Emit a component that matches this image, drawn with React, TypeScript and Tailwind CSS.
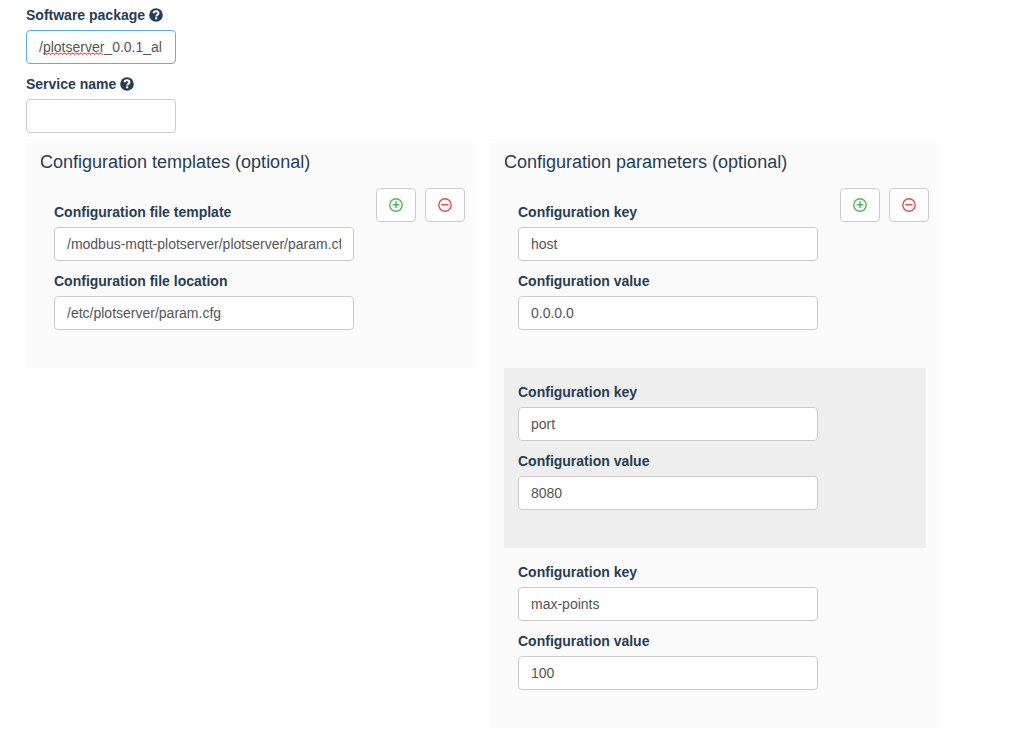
import { useId, useState } from "react";
import type { ReactNode } from "react";
import clsx from "clsx";

type FieldProps = {
  label: string;
  value: string;
  help?: boolean;
  active?: boolean;
  children?: ReactNode;
};

function HelpIcon() {
  return (
    <svg aria-hidden="true" viewBox="0 0 14 14" className="size-3.5">
      <circle cx="7" cy="7" r="6.8" fill="currentColor" />
      <path
        d="M4.6 5.3C4.6 3.9 5.6 3.2 7 3.2C8.5 3.2 9.5 4 9.5 5.2C9.5 6.7 7.2 6.8 7.2 8.6"
        fill="none"
        stroke="white"
        strokeWidth="1.9"
      />
      <rect x="6.1" y="9.3" width="2.1" height="2" fill="white" />
    </svg>
  );
}

function Field({ label, value, help, active, children }: FieldProps) {
  const id = useId();
  const [text, setText] = useState(value);
  return (
    <div>
      <label htmlFor={id} className="mb-[5px] flex items-center gap-1 font-bold">
        {label}
        {help && <HelpIcon />}
      </label>
      <div className="relative">
        <input
          id={id}
          type="text"
          value={text}
          onChange={(e) => setText(e.target.value)}
          className={clsx(
            "block h-[34px] w-full rounded-sm border bg-white px-3 text-[#555555] outline-none focus:border-[#5dade2]",
            active ? "border-[#5dade2]" : "border-[#cccccc]",
          )}
        />
        {children}
      </div>
    </div>
  );
}

function SpellingMark() {
  return (
    <svg
      aria-hidden="true"
      className="pointer-events-none absolute top-[22px] left-[17px] h-[3px] w-[62px]"
      viewBox="0 0 62 3"
    >
      <path
        d={"M0 2.2" + " l1 -1 l1 0 l1 1 l1 0".repeat(15)}
        fill="none"
        stroke="#ee1c1c"
        strokeWidth="1"
      />
    </svg>
  );
}

function RoundButton({ kind }: { kind: "add" | "remove" }) {
  const add = kind === "add";
  return (
    <button
      type="button"
      aria-label={add ? "Add" : "Remove"}
      className={clsx(
        "flex h-[34px] w-10 items-center justify-center rounded-sm border border-[#cccccc] bg-white",
        add ? "text-[#4cb85c]" : "text-[#e0504c]",
      )}
    >
      <svg viewBox="0 0 14 14" className="size-3.5" fill="none" stroke="currentColor">
        <circle cx="7" cy="7" r="6.2" strokeWidth="1.4" />
        <path d={add ? "M3.6 6.7h6.8M7 3.3v6.8" : "M3.4 6.7h7.2"} strokeWidth="1.5" />
      </svg>
    </button>
  );
}

type Entry = { label: string; value: string }[];

function Panel({ title, entries }: { title: string; entries: Entry[] }) {
  return (
    <section className="w-[450px] bg-[#fbfbfb] px-3.5">
      <h2 className="h-[45px] pt-2 text-lg leading-[22px]">{title}</h2>
      {entries.map((entry, i) => (
        <div
          key={i}
          className={clsx("flex items-start gap-[22px] pl-3.5", i % 2 === 1 && "bg-[#eeeeee]")}
        >
          <div className="flex w-[300px] shrink-0 flex-col gap-2.5 pt-3.5 pb-[38px]">
            {entry.map((f) => (
              <Field key={f.label} label={f.label} value={f.value} />
            ))}
          </div>
          {i === 0 && (
            <div className="flex shrink-0 gap-[9px]">
              <RoundButton kind="add" />
              <RoundButton kind="remove" />
            </div>
          )}
        </div>
      ))}
    </section>
  );
}

const parameter = (key: string, value: string): Entry => [
  { label: "Configuration key", value: key },
  { label: "Configuration value", value },
];

export default function App() {
  return (
    <form className="bg-white px-[26px] pt-[5px] pb-2 font-['Liberation_Sans',Arial,sans-serif] text-sm leading-5 text-[#253d56]">
      <div className="flex w-[150px] flex-col gap-2.5">
        <Field label="Software package" value="/plotserver_0.0.1_al" help active>
          <SpellingMark />
        </Field>
        <Field label="Service name" value="" help />
      </div>
      <div className="mt-2.5 flex flex-wrap items-start gap-3.5">
        <Panel
          title="Configuration templates (optional)"
          entries={[
            [
              {
                label: "Configuration file template",
                value: "/modbus-mqtt-plotserver/plotserver/param.cfg",
              },
              { label: "Configuration file location", value: "/etc/plotserver/param.cfg" },
            ],
          ]}
        />
        <Panel
          title="Configuration parameters (optional)"
          entries={[
            parameter("host", "0.0.0.0"),
            parameter("port", "8080"),
            parameter("max-points", "100"),
          ]}
        />
      </div>
    </form>
  );
}
